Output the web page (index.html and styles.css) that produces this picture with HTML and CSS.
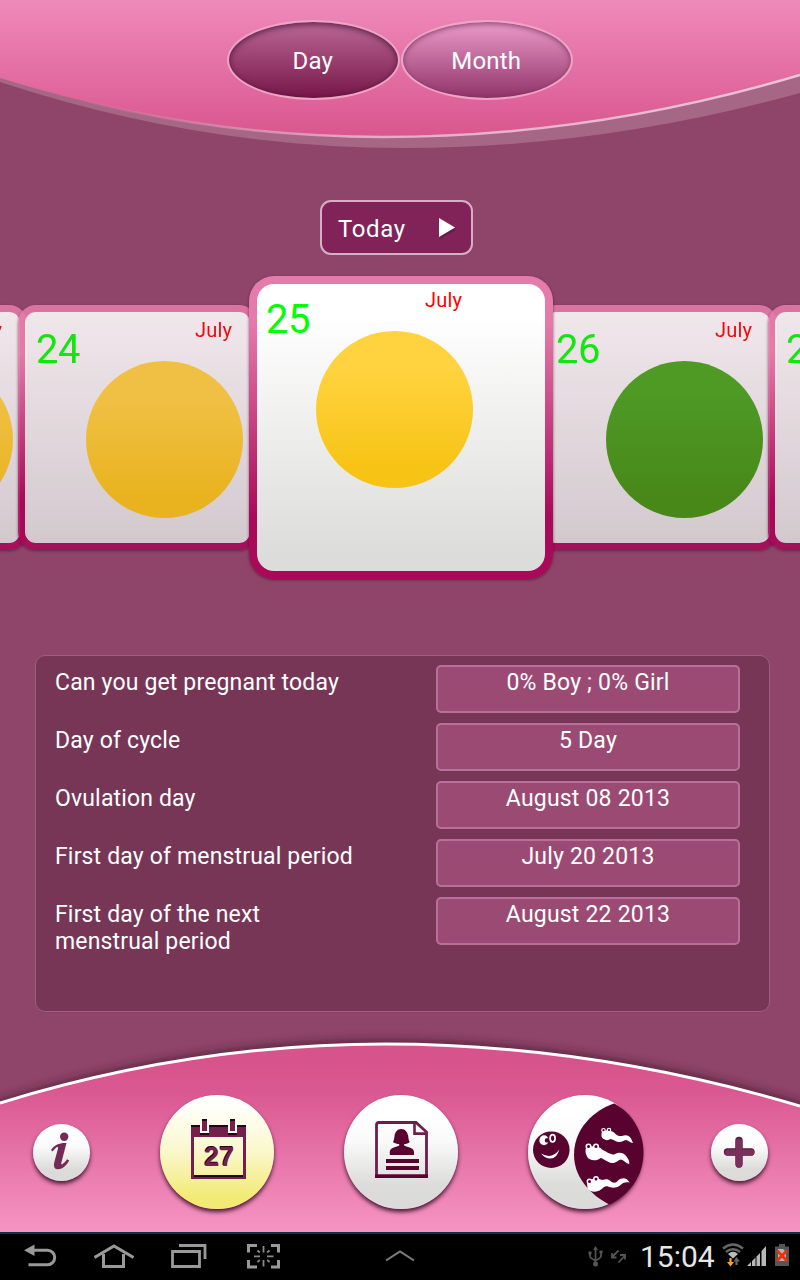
FILE: index.html
```html
<!DOCTYPE html>
<html lang="en">

<head>
    <meta charset="UTF-8">
    <meta name="viewport" content="width=device-width, initial-scale=1.0">
    <title>Calendar</title>
    <link rel="stylesheet" href="styles.css">
</head>

<body>
    <header class="header">
        <svg class="header-bg" width="800" height="150" viewBox="0 0 800 150">
            <defs>
                <linearGradient id="head-fill" x1="0" y1="0" x2="0" y2="1">
                    <stop offset="0" stop-color="#ef8aba" />
                    <stop offset="1" stop-color="#d9568f" />
                </linearGradient>
                <linearGradient id="head-line" x1="0" y1="0" x2="1" y2="0">
                    <stop offset="0.1" stop-color="#dfa3c0" stop-opacity="0" />
                    <stop offset="0.45" stop-color="#e3abc6" />
                    <stop offset="1" stop-color="#ecc5d8" />
                </linearGradient>
            </defs>
            <path d="M0 0H800V93Q602 148 403 148Q201 148 0 82Z" fill="#a66786" />
            <path d="M0 0H800V75Q592 137 383 137Q191 137 0 78Z" fill="url(#head-fill)" />
            <path d="M800 75Q592 137 383 137Q191 137 0 78" fill="none" stroke="url(#head-line)" stroke-width="2.400" />
        </svg>
        <nav class="tabs">
            <div class="tab active">Day</div>
            <div class="tab">Month</div>
        </nav>
    </header>

    <div class="today-row">
        <div class="today-btn">
            <span>Today</span>
            <svg class="today-arrow" width="17" height="21" viewBox="0 0 17 21">
                <path d="M1 2.500L17 12L1 21Z" fill="#5a1a40" opacity=".7" />
                <path d="M0 0L16 9.500L0 19Z" fill="#fff" />
            </svg>
        </div>
    </div>

    <main class="days">
        <div class="slot slot-prev">
            <div class="card">
                <div class="month">July</div>
                <div class="date">23</div>
                <div class="dot"></div>
            </div>
        </div>
        <div class="slot">
            <div class="card">
                <div class="month">July</div>
                <div class="date">24</div>
                <div class="dot"></div>
            </div>
        </div>
        <div class="slot slot-current">
            <div class="card current">
                <div class="month">July</div>
                <div class="date">25</div>
                <div class="dot"></div>
            </div>
        </div>
        <div class="slot">
            <div class="card">
                <div class="month">July</div>
                <div class="date">26</div>
                <div class="dot green"></div>
            </div>
        </div>
        <div class="slot">
            <div class="card">
                <div class="month">July</div>
                <div class="date">27</div>
                <div class="dot green"></div>
            </div>
        </div>
    </main>

    <section class="panel">
        <div class="label">Can you get pregnant today</div>
        <div class="value">0% Boy ; 0% Girl</div>
        <div class="label">Day of cycle</div>
        <div class="value">5 Day</div>
        <div class="label">Ovulation day</div>
        <div class="value">August 08 2013</div>
        <div class="label">First day of menstrual period</div>
        <div class="value">July 20 2013</div>
        <div class="label">First day of the next<br>menstrual period</div>
        <div class="value">August 22 2013</div>
    </section>

    <footer class="footer">
        <svg class="footer-bg" width="800" height="208" viewBox="0 0 800 208">
            <defs>
                <linearGradient id="foot-fill" x1="0" y1="0" x2="0" y2="1">
                    <stop offset="0.1" stop-color="#d7538c" />
                    <stop offset="0.25" stop-color="#da5891" />
                    <stop offset="1" stop-color="#f595c3" />
                </linearGradient>
                <filter id="foot-blur" x="-5%" y="-20%" width="110%" height="140%">
                    <feGaussianBlur stdDeviation="5" />
                </filter>
            </defs>
            <path d="M-20 82Q182 16 385 16Q602 16 820 84V208H-20Z" fill="#4a1a34" opacity=".8" filter="url(#foot-blur)" />
            <path d="M0 79Q192 20 385 20Q592 20 800 82V208H0Z" fill="url(#foot-fill)" />
            <path d="M0 79Q192 20 385 20Q592 20 800 82" fill="none" stroke="#fff" stroke-width="3" />
        </svg>
        <nav class="menu">
            <div class="round small">
                <svg width="57" height="57" viewBox="0 0 57 57">
                    <circle cx="31.200" cy="12.800" r="4.200" fill="#752a55" />
                    <path d="M18 26C21 21 27 18.500 33.500 19L28.500 38C27.800 40.500 28.500 41 30.200 39.500C32 38 33 37 34 35.200L36.200 36.500C33 42.500 28.500 45.500 24.500 45.200C20.500 45 20.500 41 21.500 37.500L25 24.500C25.200 22.500 24 22.500 22.300 24.500L19.500 27.500Z" fill="#752a55" />
                </svg>
            </div>
            <div class="round selected">
                <svg width="114" height="114" viewBox="0 0 114 114">
                    <path d="M31 30H86V84H31ZM34 42V81H83V42Z" fill="#75204c" fill-rule="evenodd" />
                    <path d="M31 30H40V32H31ZM49 30H68V32H49ZM77 30H86V32H77ZM34 80H83V82H34ZM40 38H49V40H40ZM68 38H77V40H68Z" fill="#1c0713" />
                    <path d="M40 28H49V38H40ZM68 28H77V38H68Z" fill="#fefcec" />
                    <path d="M42 24H47V36H42ZM70 24H75V36H70Z" fill="#75204c" />
                    <path d="M42 24H47V26H42ZM70 24H75V26H70Z" fill="#1c0713" />
                    <text class="cal-num cal-num-shade" x="58.500" y="70" text-anchor="middle">27</text>
                    <text class="cal-num" x="59.200" y="71.200" text-anchor="middle">27</text>
                </svg>
            </div>
            <div class="round">
                <svg width="114" height="114" viewBox="0 0 114 114">
                    <path d="M32.500 81V30Q32.500 27.500 35 27.500H72L82.500 37V81Z" fill="none" stroke="#6d1f49" stroke-width="2.800" />
                    <path d="M31 79.500H84V83H31Z" fill="#5a0230" />
                    <path d="M70.500 27.500V38.600H83" fill="none" stroke="#6d1f49" stroke-width="2.600" />
                    <path d="M57.300 34C53 34 51 37.500 50.500 41C50.300 43.500 49.800 45.500 49 47C51 48.500 53 49 55.200 49V50.500C53 52 46 52 45.800 57V60H70V57C69.800 52 62 52 60.200 50.500V49C62.500 49 64 48.500 65.800 47C64.800 45.500 64.400 43.500 64.200 41C63.500 37.500 61.500 34 57.300 34Z" fill="#5a0230" />
                    <path d="M42 64H75V68H42ZM42 71H75V75H42Z" fill="#5a0230" />
                </svg>
            </div>
            <div class="round">
                <svg width="116" height="114" viewBox="0 0 116 114">
                    <path d="M86.300 8.500C74 12 46 28 46 60C46 86 68 103 81.500 109.500C103 99 115.500 80 115.500 57.500C115.500 36 103 17 86.300 8.500Z" fill="#57022f" />
                    <circle cx="23.300" cy="54.700" r="18.300" fill="#57022f" />
                    <ellipse cx="16" cy="45.300" rx="4.600" ry="5" fill="#fff" />
                    <path d="M21 43.300H17.800Q15.800 45.500 17.800 47.500H21Z" fill="#57022f" />
                    <ellipse cx="24.600" cy="43.300" rx="2.500" ry="3.700" fill="#57022f" stroke="#fff" stroke-width="1.700" />
                    <path d="M13 58.500Q24 65 31.300 54.500Q29 63.500 22.500 63.600Q17 63.500 13 58.500Z" fill="#fff" />
                    <path d="M57.500 55C58 50 71 50 74 54.500C79 57 82 59.500 86 59.500C91 56.500 96 57.500 98.500 61.500C100.500 64 101.700 66.500 101.300 69C98 68.500 95.500 65 93 64.500C90 65 88 68.500 84 68C79 67.500 76 63.500 72.500 63C69 66.500 61 66 59 61.500Q57 58 57.500 55Z" fill="#fff" />
                    <circle cx="60.500" cy="51.500" r="2.300" fill="#57022f" stroke="#fff" stroke-width="1.500" />
                    <circle cx="68" cy="51.500" r="2.300" fill="#57022f" stroke="#fff" stroke-width="1.500" />
                    <path d="M73.500 38C75 34 82 34.500 86 37.500C89 40.500 91 41.500 94 41C98 39.500 101 40.500 103 43.500L105 48C102 48 100 45 98 45C95 45.500 94 47.500 90 47C87 46.500 85 44 82.500 44C79 46.500 74.500 44.500 73.500 41.500Z" fill="#fff" />
                    <circle cx="75.500" cy="35.200" r="1.700" fill="#57022f" stroke="#fff" stroke-width="1.200" />
                    <circle cx="81" cy="35" r="1.700" fill="#57022f" stroke="#fff" stroke-width="1.200" />
                    <path d="M59 88C61 83 70 83 74 85C78 84 80 83.500 83 86.500C86 88.500 88 88 90 85.500C94 82 99 82.500 101.500 87.500C97 87 95 87.500 92 90.500C88 93.500 83 93 80 91.500C77 90.500 76 92 73 94.500C69 98 61 97 59.500 93Z" fill="#fff" />
                    <circle cx="61.500" cy="86.500" r="2.200" fill="#57022f" stroke="#fff" stroke-width="1.400" />
                    <circle cx="68" cy="84" r="2.200" fill="#57022f" stroke="#fff" stroke-width="1.400" />
                </svg>
            </div>
            <div class="round small">
                <svg width="57" height="57" viewBox="0 0 57 57">
                    <path d="M28 16.500V40M16.500 28H40" stroke="#5a1a3e" stroke-width="7.400" stroke-linecap="round" />
                    <path d="M28 17.500V40.500M17 28.500H40" stroke="#79305a" stroke-width="6.200" stroke-linecap="round" />
                </svg>
            </div>
        </nav>
    </footer>

    <div class="system-bar">
        <div class="sys-left">
            <svg width="33" height="26" viewBox="0 0 33 26">
                <path d="M0 7.300L10.500 1.500V13Z" fill="#999" />
                <path d="M9 7.300H23.500A7.200 7.200 0 0 1 23.500 21.700H4.500" fill="none" stroke="#999" stroke-width="3" />
            </svg>
            <svg width="40" height="26" viewBox="0 0 40 26">
                <path d="M.5 14.500L20 3L39.500 14.500M9.500 11V23.500H29.500V11" fill="none" stroke="#999" stroke-width="3" />
            </svg>
            <svg width="36" height="26" viewBox="0 0 36 26">
                <path d="M1.500 8.500H28.500V23.500H1.500ZM8 2.500H34V16" fill="none" stroke="#999" stroke-width="2.800" />
            </svg>
            <svg class="capture" width="34" height="26" viewBox="0 0 34 26">
                <path d="M1.500 9.500V2.500H10M24 2.500H31.500V9.500M31.500 17V24H24M10 24H1.500V17" fill="none" stroke="#999" stroke-width="3" />
                <path d="M16.500 3V9.500M16.500 17V23.500M7 13.300H13M20 13.300H26.500M10.500 7.500L12.800 9.500M22.500 7.500L20.200 9.500M10.500 19L12.800 17M22.500 19L20.200 17" stroke="#8a8a8a" stroke-width="1.800" />
            </svg>
        </div>
        <svg class="sys-chevron" width="30" height="12" viewBox="0 0 30 12">
            <path d="M1 10.500L15 1.500L29 10.500" fill="none" stroke="#808080" stroke-width="2" />
        </svg>
        <div class="sys-right">
            <svg width="15" height="21" viewBox="0 0 15 21">
                <path d="M7.500 3V17M2 8V10.500Q2 12 7.500 14.500Q13 12 13 10V6.500" fill="none" stroke="#555" stroke-width="1.700" />
                <path d="M7.500 0L10 4H5ZM.5 5.500H3.500V8.500H.5ZM11.500 4.500H14.500V7.500H11.500Z" fill="#555" />
                <circle cx="7.500" cy="18" r="2.500" fill="#555" />
            </svg>
            <svg class="sync" width="15" height="15" viewBox="0 0 15 15">
                <path d="M7.500 1.500L1.500 7.500M1 4V8.500H5.500M7.500 13.500L13.500 7M9 6H14V10.500" fill="none" stroke="#555" stroke-width="1.800" />
            </svg>
            <span class="clock">15:04</span>
            <svg class="wifi" width="22" height="25" viewBox="0 0 22 25">
                <path d="M1 5.500Q11 -2.500 21 5.500M4 9Q11 3.500 18 9" fill="none" stroke="#666" stroke-width="2.500" />
                <path d="M6 11Q11 6.500 16 11L11 15.500Z" fill="#bbb" />
                <path d="M8.500 15V21" stroke="#ffa126" stroke-width="2.200" />
                <path d="M5 19H12L8.500 23.500Z" fill="#ffa126" />
                <path d="M14.500 17V22" stroke="#666" stroke-width="2.200" />
                <path d="M11.500 18.500H18L14.500 14Z" fill="#666" />
            </svg>
            <svg class="signal" width="19" height="20" viewBox="0 0 19 20">
                <path d="M0 20L4 16V20ZM5 20V15L8.500 11.500V20ZM9.500 20V10.500L13 7V20ZM14.500 20V5L19 0V20Z" fill="#b8b8b8" />
            </svg>
            <svg class="battery" width="14" height="22" viewBox="0 0 14 22">
                <path d="M0 2.500H4V0H10V2.500H14V22H0Z" fill="#555" />
                <path d="M3 5H8L11 8V17H3Z" fill="#ddd" opacity=".7" />
                <path d="M2 6.500L12 17M12 6.500L2 17" stroke="#f32c0c" stroke-width="2.800" />
            </svg>
        </div>
    </div>
</body>

</html>
```

FILE: styles.css
```css
* {
    box-sizing: border-box;
}

body {
    display: flex;
    flex-direction: column;
    width: 800px;
    height: 1280px;
    margin: 0;
    overflow: hidden;
    background-color: #8f4569;
    color: #fff;
    font-family: Roboto, "Liberation Sans", sans-serif;
}

svg {
    display: block;
    flex-shrink: 0;
}

.header {
    position: relative;
    height: 200px;
    padding-top: 20px;
}

.header-bg {
    position: absolute;
    top: 0;
    left: 0;
}

/* day / month switch */
.tabs {
    position: relative;
    display: flex;
    gap: 1px;
    padding-left: 227px;
}

.tab {
    display: flex;
    justify-content: center;
    align-items: center;
    width: 172.500px;
    height: 80px;
    border: 2px solid #eda4c5;
    border-radius: 50%;
    background: linear-gradient(#e291c0 10%, #913369);
    box-shadow: inset 0 2px 5px rgba(70, 10, 50, 0.5);
    font-size: 24px;
    letter-spacing: 0.2px;
    padding: 2px 1px 0 0;
}

.tab.active {
    background: linear-gradient(#b4608f 10%, #771649);
    box-shadow: inset 0 2px 6px rgba(50, 5, 35, 0.7);
}

.today-row {
    display: flex;
    padding-left: 320px;
    height: 75px;
}

.today-btn {
    display: flex;
    align-items: center;
    justify-content: space-between;
    width: 153px;
    height: 55px;
    padding: 2px 15px 0 16px;
    border: 2px solid #d7afc4;
    border-radius: 11px;
    background-color: #812358;
    font-size: 24px;
    letter-spacing: 0.6px;
}

/* day cards */
.days {
    display: grid;
    grid-template-columns: 18px 230px 290px 230px 32px;
    align-items: center;
    height: 305px;
    overflow-x: clip;
}

.slot-prev {
    margin-left: -212px;
}

.slot-current {
    position: relative;
    z-index: 1;
}

.card {
    width: 239px;
    height: 245px;
    border: 7px solid transparent;
    border-radius: 18px;
    background: linear-gradient(#fff, #ddd) padding-box,
        linear-gradient(#e57bab, #e57bab 20%, #a80958 80%) border-box;
    box-shadow: 0 1px 3px rgba(50, 10, 35, 0.6);
    opacity: 0.87;
}

.card.current {
    width: 304px;
    height: 303px;
    margin-left: 1px;
    border-width: 8px;
    border-radius: 25px;
    background: linear-gradient(#fff 10%, #dcdcda 95%) padding-box,
        linear-gradient(#e57bab, #e57bab 15%, #a80958 80%) border-box;
    opacity: 1;
}

.month {
    height: 30px;
    padding: 6px 0 0 170px;
    color: #f00;
    font-size: 20px;
    line-height: 24px;
    letter-spacing: 0.2px;
}

.date {
    height: 19px;
    padding-left: 11px;
    color: #0f0;
    font-size: 40px;
    line-height: 16px;
    letter-spacing: -0.6px;
}

.dot {
    width: 157px;
    height: 157px;
    margin-left: 60.500px;
    border-radius: 50%;
    background: linear-gradient(#ffd33f 25%, #f7c416 85%);
}

.dot.green {
    background: linear-gradient(#45a71c 20%, #3d920d 90%);
}

.current .month {
    height: 28px;
    padding: 4px 0 0 168px;
}

.current .date {
    padding-left: 9px;
}

.current .dot {
    margin: -0.500px 0 0 58.500px;
}

/* details */
.panel {
    display: grid;
    grid-template-columns: 381px 304px;
    grid-template-rows: repeat(5, 48px);
    row-gap: 10px;
    width: 735px;
    height: 357px;
    margin: 75px 0 0 35px;
    padding: 9px 0 0 19px;
    border: 1px solid #9f5d80;
    border-radius: 10px;
    background-color: #773656;
    font-size: 23px;
    line-height: 27px;
    letter-spacing: 0.2px;
}

.label {
    padding-top: 4px;
    letter-spacing: 0.16px;
}

.value {
    padding-top: 2px;
    border: 2px solid #b8709a;
    border-radius: 5px;
    background-color: #9b4b73;
    text-align: center;
}

/* bottom menu */
.footer {
    position: relative;
    flex: 1;
    margin-top: 12px;
}

.footer-bg {
    position: absolute;
    left: 0;
    bottom: 0;
}

.menu {
    position: relative;
    display: flex;
    align-items: center;
    gap: 70px;
    padding: 71px 0 0 33px;
}

.round {
    width: 114px;
    height: 114px;
    flex-shrink: 0;
    border-radius: 50%;
    background: linear-gradient(#fff 15%, #fafafa 40%, #dbdbd9 80%);
    box-shadow: 0 3px 4px rgba(60, 15, 40, 0.9);
}

.round.small {
    width: 57px;
    height: 57px;
}

.round.small:last-child {
    margin-left: -1px;
}

.round.selected {
    background: linear-gradient(#fffffb 10%, #faf7cb 50%, #f2ea74 90%);
}

.cal-num {
    fill: #75204c;
    font-family: "Liberation Sans", Arial, sans-serif;
    font-size: 27px;
    font-weight: bold;
}

.cal-num-shade {
    fill: #1c0713;
}

.system-bar {
    display: flex;
    align-items: center;
    height: 48px;
    padding-bottom: 2px;
    border-top: 2px solid #0b3345;
    background-color: #000;
}

.sys-left {
    display: flex;
    gap: 37px;
    padding-left: 24px;
    width: 385px;
}

.capture {
    margin-left: 3px;
}

.sys-chevron {
    margin-right: 173px;
}

.sys-right {
    display: flex;
    align-items: center;
}

.sync {
    margin-left: 8px;
}

.clock {
    width: 85px;
    padding: 2px 0 0 14px;
    color: #e6e6e6;
    font-size: 30px;
    line-height: 40px;
    white-space: nowrap;
}

.wifi {
    margin: 0 0 2px 11px;
}

.signal {
    margin-left: 3px;
}

.battery {
    margin: 0 0 2px 9px;
}
```
